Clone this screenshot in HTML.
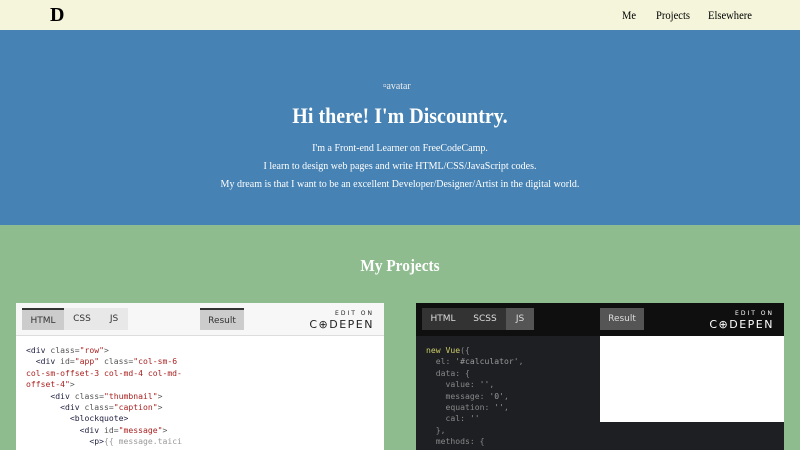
<!DOCTYPE html>
<html><head><meta charset="utf-8"><style>
*{margin:0;padding:0;box-sizing:border-box}
body{width:800px;height:450px;overflow:hidden;font-family:"Liberation Serif",serif;background:#8fbc8f;position:relative}
.nav{position:absolute;left:0;top:0;width:800px;height:30px;background:#f5f5dc}
.logo{position:absolute;left:50px;top:4px;font-size:20px;font-weight:bold;color:#000}
.nav a{position:absolute;top:8px;font-size:12px;color:#000;transform:scaleX(.88);transform-origin:left}
.hero{position:absolute;left:0;top:30px;width:800px;height:195px;background:#4682b4;color:#fff;text-align:center}
.av{position:absolute;left:383px;top:50px;font-size:11px;color:#eee;transform:scaleX(.9);transform-origin:left}
h1{position:absolute;left:0;width:800px;top:73px;font-size:22px;transform:scaleX(.91)}
.p{position:absolute;left:0;width:800px;font-size:11px;transform:scaleX(.91)}
h2{position:absolute;left:0;width:800px;top:256px;text-align:center;color:#fff;font-size:17px;transform:scaleX(.9)}
.emb{position:absolute;top:303px;width:368px;height:147px;overflow:hidden}
.hd{position:absolute;left:0;top:0;width:368px;height:33px}
.tab{position:absolute;top:5px;height:22px;font:9px "DejaVu Sans",sans-serif;line-height:22px;text-align:center}
.code{position:absolute;left:10px;top:42px;font:8.1px/11.4px "DejaVu Sans Mono","Liberation Mono",monospace;white-space:pre}
.cp{position:absolute;right:10px;top:7px;text-align:right;font-family:"DejaVu Sans",sans-serif}
.cp .s{font-size:6px;letter-spacing:2px}
.cp .b{font-size:11px;letter-spacing:1.5px;margin-top:1px}
</style></head><body>
<div class="nav"><div class="logo">D</div><a style="left:622px">Me</a><a style="left:656px">Projects</a><a style="left:708px">Elsewhere</a></div>
<div class="hero">
<div class="av">▫avatar</div>
<h1>Hi there! I'm Discountry.</h1>
<div class="p" style="top:112px">I'm a Front-end Learner on FreeCodeCamp.</div>
<div class="p" style="top:130px">I learn to design web pages and write HTML/CSS/JavaScript codes.</div>
<div class="p" style="top:148px">My dream is that I want to be an excellent Developer/Designer/Artist in the digital world.</div>
</div>
<h2>My Projects</h2>

<div class="emb" style="left:16px;background:#fff">
<div class="hd" style="background:#f7f7f7;border-bottom:1px solid #ddd"></div>
<div class="tab" style="left:6px;width:42px;background:#ccc;border-top:2px solid #333;color:#333">HTML</div>
<div class="tab" style="left:48px;width:36px;background:#e8e8e8;color:#333">CSS</div>
<div class="tab" style="left:84px;width:28px;background:#e8e8e8;color:#333">JS</div>
<div class="tab" style="left:184px;width:44px;background:#ccc;border-top:2px solid #333;color:#333">Result</div>
<div class="cp" style="color:#222"><div class="s">EDIT ON</div><div class="b">C⊕DEPEN</div></div>
<div class="code" style="color:#555"><span style="color:#224">&lt;div</span> class=<span style="color:#a22">"row"</span>&gt;
  <span style="color:#224">&lt;div</span> id=<span style="color:#a22">"app"</span> class=<span style="color:#a22">"col-sm-6</span>
<span style="color:#a22">col-sm-offset-3 col-md-4 col-md-</span>
<span style="color:#a22">offset-4"</span>&gt;
     <span style="color:#224">&lt;div</span> class=<span style="color:#a22">"thumbnail"</span>&gt;
       <span style="color:#224">&lt;div</span> class=<span style="color:#a22">"caption"</span>&gt;
         <span style="color:#224">&lt;blockquote&gt;</span>
           <span style="color:#224">&lt;div</span> id=<span style="color:#a22">"message"</span>&gt;
             <span style="color:#224">&lt;p&gt;</span><span style="color:#999">{{ message.taici</span></div>
</div>

<div class="emb" style="left:416px;background:#1d1f23">
<div class="hd" style="background:#0f0f0f"></div>
<div class="tab" style="left:6px;width:42px;background:#333;color:#ddd">HTML</div>
<div class="tab" style="left:48px;width:42px;background:#333;color:#ddd">SCSS</div>
<div class="tab" style="left:90px;width:28px;background:#555;color:#ddd">JS</div>
<div class="tab" style="left:184px;width:44px;background:#555;color:#ddd">Result</div>
<div class="cp" style="color:#fff"><div class="s">EDIT ON</div><div class="b">C⊕DEPEN</div></div>
<div style="position:absolute;left:184px;top:33px;width:184px;height:86px;background:#fff"></div>
<div class="code" style="color:#888"><span style="color:#cc6">new Vue</span>({
  el: <span style="color:#999">'#calculator'</span>,
  data: {
    value: <span style="color:#999">''</span>,
    message: <span style="color:#999">'0'</span>,
    equation: <span style="color:#999">''</span>,
    cal: <span style="color:#999">''</span>
  },
  methods: {</div>
</div>
</body></html>
